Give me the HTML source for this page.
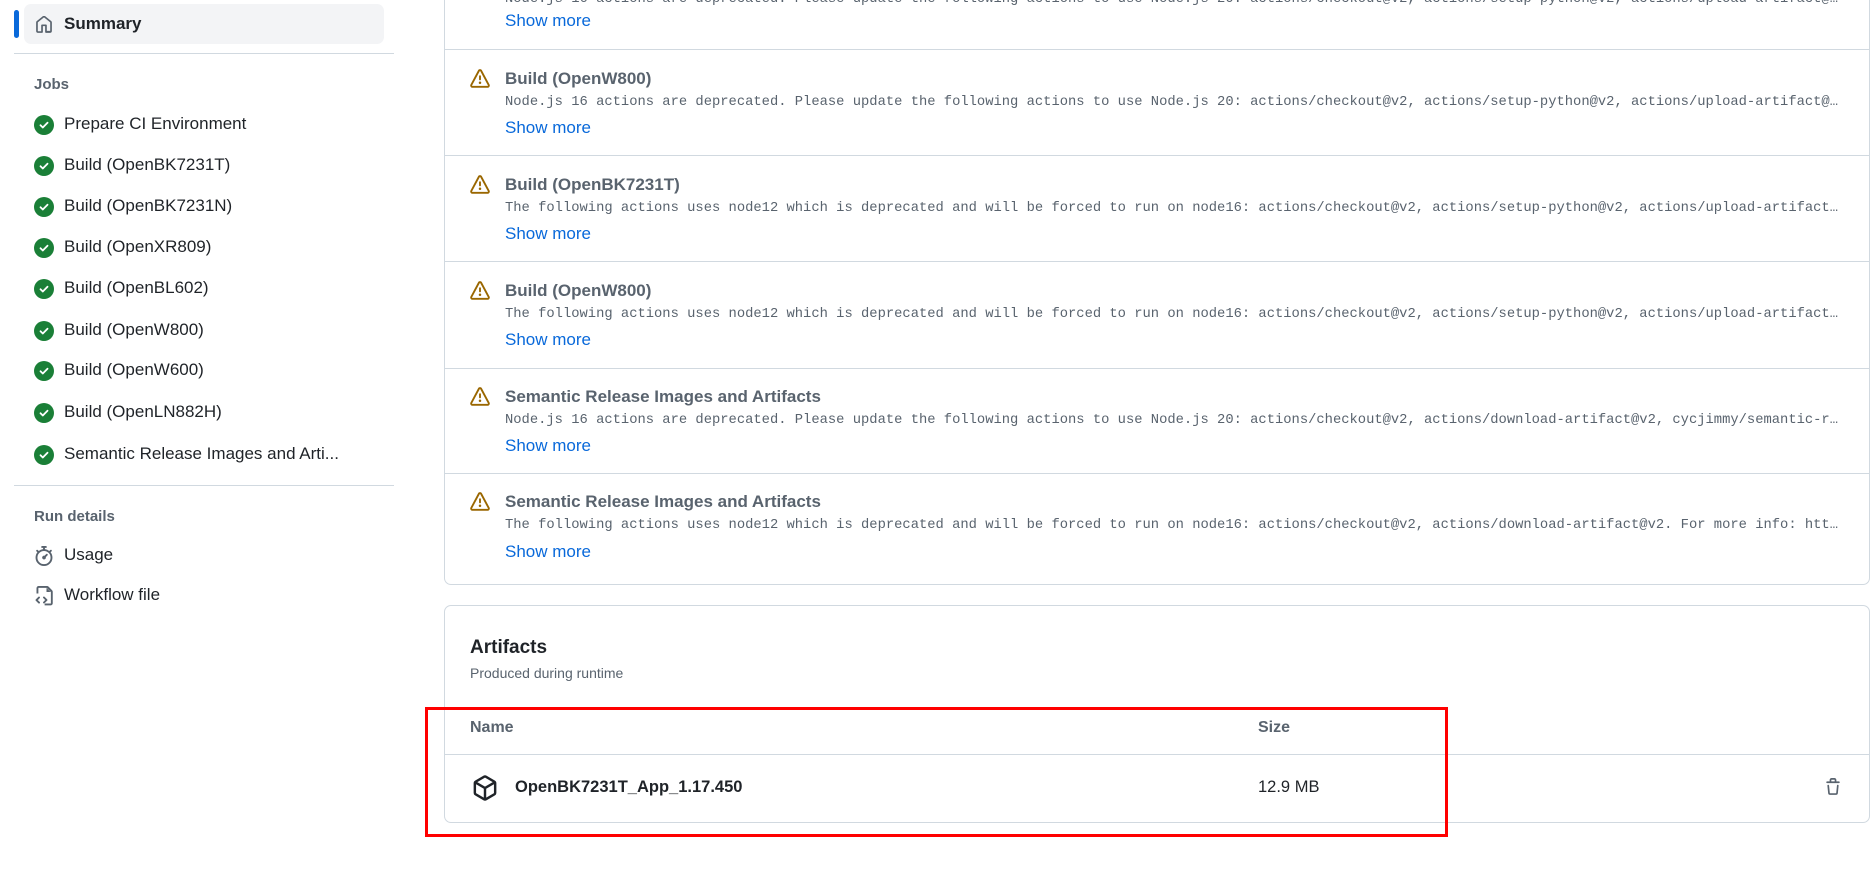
<!DOCTYPE html>
<html><head><meta charset="utf-8"><style>
*{box-sizing:border-box;margin:0;padding:0}
body{width:1872px;height:870px;background:#fff;font-family:"Liberation Sans",sans-serif;color:#1f2328;position:relative;overflow:hidden}
.a{position:absolute;white-space:nowrap}
.side{font-size:17px;color:#1f2328}
.lbl{font-size:15px;color:#59636e;font-weight:bold}
.chk{position:absolute;left:34px;width:20px;height:20px;border-radius:50%;background:#1a7f37}
.chk svg{position:absolute;left:4px;top:4px}
.card{position:absolute;left:444px;width:1426px;border:1px solid #d1d9e0;border-radius:7px;background:#fff}
.t{font-size:17px;color:#59636e;font-weight:bold}
.m{font-family:"Liberation Mono",monospace;font-size:13.8px;color:#59636e;width:1341px;overflow:hidden;text-overflow:ellipsis}
.s{font-size:17px;color:#0969da}
</style></head><body>
<div class="a" style="left:14px;top:10px;width:5px;height:28px;background:#0969da;border-radius:3px"></div>
<div class="a" style="left:24px;top:4px;width:360px;height:40px;background:#f3f4f6;border-radius:7px"></div>
<svg class="a" style="left:35px;top:16px" width="18" height="18" viewBox="0 0 16 16"><path d="M6.9.2a1.75 1.75 0 0 1 2.2 0l5.25 4.2c.4.33.65.83.65 1.36v7.49A1.75 1.75 0 0 1 13.25 15h-3.5a.75.75 0 0 1-.75-.75V9H7v5.25a.75.75 0 0 1-.75.75h-3.5A1.75 1.75 0 0 1 1 13.25V5.76c0-.53.24-1.03.65-1.36Zm1.25 1.170a.25.25 0 0 0-.3 0L2.6 5.58a.25.25 0 0 0-.1.18v7.49c0 .14.11.25.25.25H5.5V8.25a.75.75 0 0 1 .75-.75h3.5a.75.75 0 0 1 .75.75v5h2.75a.25.25 0 0 0 .25-.25V5.76a.25.25 0 0 0-.1-.2Z" fill="#59636e"/></svg>
<div class="a side" style="left:64px;top:14px;font-weight:bold">Summary</div>
<div class="a" style="left:14px;top:53px;width:380px;height:1px;background:#d1d9e0"></div>
<div class="a lbl" style="left:34px;top:76px">Jobs</div>

<div class="chk" style="top:115px"><svg width="12" height="12" viewBox="0 0 12 12"><path d="M2.5 6.2l2.3 2.3 4.7-4.8" stroke="#fff" stroke-width="1.8" fill="none" stroke-linecap="round" stroke-linejoin="round"/></svg></div>
<div class="a side" style="left:64px;top:114px">Prepare CI Environment</div>
<div class="chk" style="top:156px"><svg width="12" height="12" viewBox="0 0 12 12"><path d="M2.5 6.2l2.3 2.3 4.7-4.8" stroke="#fff" stroke-width="1.8" fill="none" stroke-linecap="round" stroke-linejoin="round"/></svg></div>
<div class="a side" style="left:64px;top:155px">Build (OpenBK7231T)</div>
<div class="chk" style="top:197px"><svg width="12" height="12" viewBox="0 0 12 12"><path d="M2.5 6.2l2.3 2.3 4.7-4.8" stroke="#fff" stroke-width="1.8" fill="none" stroke-linecap="round" stroke-linejoin="round"/></svg></div>
<div class="a side" style="left:64px;top:196px">Build (OpenBK7231N)</div>
<div class="chk" style="top:238px"><svg width="12" height="12" viewBox="0 0 12 12"><path d="M2.5 6.2l2.3 2.3 4.7-4.8" stroke="#fff" stroke-width="1.8" fill="none" stroke-linecap="round" stroke-linejoin="round"/></svg></div>
<div class="a side" style="left:64px;top:237px">Build (OpenXR809)</div>
<div class="chk" style="top:279px"><svg width="12" height="12" viewBox="0 0 12 12"><path d="M2.5 6.2l2.3 2.3 4.7-4.8" stroke="#fff" stroke-width="1.8" fill="none" stroke-linecap="round" stroke-linejoin="round"/></svg></div>
<div class="a side" style="left:64px;top:278px">Build (OpenBL602)</div>
<div class="chk" style="top:321px"><svg width="12" height="12" viewBox="0 0 12 12"><path d="M2.5 6.2l2.3 2.3 4.7-4.8" stroke="#fff" stroke-width="1.8" fill="none" stroke-linecap="round" stroke-linejoin="round"/></svg></div>
<div class="a side" style="left:64px;top:320px">Build (OpenW800)</div>
<div class="chk" style="top:361px"><svg width="12" height="12" viewBox="0 0 12 12"><path d="M2.5 6.2l2.3 2.3 4.7-4.8" stroke="#fff" stroke-width="1.8" fill="none" stroke-linecap="round" stroke-linejoin="round"/></svg></div>
<div class="a side" style="left:64px;top:360px">Build (OpenW600)</div>
<div class="chk" style="top:403px"><svg width="12" height="12" viewBox="0 0 12 12"><path d="M2.5 6.2l2.3 2.3 4.7-4.8" stroke="#fff" stroke-width="1.8" fill="none" stroke-linecap="round" stroke-linejoin="round"/></svg></div>
<div class="a side" style="left:64px;top:402px">Build (OpenLN882H)</div>
<div class="chk" style="top:445px"><svg width="12" height="12" viewBox="0 0 12 12"><path d="M2.5 6.2l2.3 2.3 4.7-4.8" stroke="#fff" stroke-width="1.8" fill="none" stroke-linecap="round" stroke-linejoin="round"/></svg></div>
<div class="a side" style="left:64px;top:444px">Semantic Release Images and Arti...</div>
<div class="a" style="left:14px;top:485px;width:380px;height:1px;background:#d1d9e0"></div>
<div class="a lbl" style="left:34px;top:508px">Run details</div>
<svg class="a" style="left:34px;top:546px" width="20" height="20" viewBox="0 0 16 16"><path d="M5.75.75A.75.75 0 0 1 6.5 0h3a.75.75 0 0 1 0 1.5h-.75v1l-.001.041a6.724 6.724 0 0 1 3.464 1.435l.007-.006.75-.75a.749.749 0 0 1 1.275.326.749.749 0 0 1-.215.734l-.75.75-.006.007a6.75 6.75 0 1 1-10.548 0L2.720 5.030l-.75-.75a.751.751 0 0 1 .018-1.042.751.751 0 0 1 1.042-.018l.75.75.007.006A6.72 6.720 0 0 1 7.25 2.541V1.5H6.5a.75.75 0 0 1-.75-.75ZM8 14.5A5.25 5.25 0 1 0 8 4a5.25 5.25 0 0 0 0 10.5Zm.389-6.7 1.33-1.33a.75.75 0 1 1 1.061 1.06L9.45 8.861A1.503 1.503 0 0 1 8 10.75a1.499 1.499 0 1 1 .389-2.950Z" fill="#59636e"/></svg>
<div class="a side" style="left:64px;top:545px">Usage</div>
<svg class="a" style="left:34px;top:586px" width="20" height="20" viewBox="0 0 16 16"><path d="M3.5 1.75a.25.25 0 0 1 .25-.25h6.5l3.25 3.25v9a.25.25 0 0 1-.25.25H8.5V15.5h4.75A1.75 1.75 0 0 0 15 13.75V4.6c0-.46-.18-.9-.51-1.24L11.64.51A1.75 1.75 0 0 0 10.4 0H3.75A1.75 1.75 0 0 0 2 1.75V6h1.5ZM10 1.5v3.25h3.25M4.53 9.72 3.06 11.25l1.47 1.47a.75.75 0 1 1-1.06 1.06l-2-2a.75.75 0 0 1 0-1.06l2-2a.75.75 0 1 1 1.06 1.060Zm2.94 0a.75.75 0 1 1 1.06-1.06l2 2a.75.75 0 0 1 0 1.06l-2 2a.75.75 0 1 1-1.06-1.06l1.47-1.47Z" fill="#59636e"/></svg>
<div class="a side" style="left:64px;top:585px">Workflow file</div>

<div class="card" style="top:-10px;height:595px;border-top:none;border-radius:0 0 7px 7px"></div>
<div class="a m" style="left:505px;top:-8px">Node.js 16 actions are deprecated. Please update the following actions to use Node.js 20: actions/checkout@v2, actions/setup-python@v2, actions/upload-artifact@v2</div>
<div class="a s" style="left:505px;top:11px">Show more</div>

<div class="a" style="left:444px;top:49px;width:1426px;height:1px;background:#d1d9e0"></div>
<div class="a" style="left:444px;top:155px;width:1426px;height:1px;background:#d1d9e0"></div>
<div class="a" style="left:444px;top:261px;width:1426px;height:1px;background:#d1d9e0"></div>
<div class="a" style="left:444px;top:368px;width:1426px;height:1px;background:#d1d9e0"></div>
<div class="a" style="left:444px;top:473px;width:1426px;height:1px;background:#d1d9e0"></div>

<svg class="a" style="left:470px;top:69px" width="20" height="20" viewBox="0 0 16 16"><path d="M6.457 1.047c.659-1.234 2.427-1.234 3.086 0l6.082 11.378A1.75 1.75 0 0 1 14.082 15H1.918a1.75 1.75 0 0 1-1.543-2.575Zm1.763.707a.25.25 0 0 0-.44 0L1.698 13.132a.25.25 0 0 0 .22.368h12.164a.25.25 0 0 0 .22-.368Zm.53 3.996v2.5a.75.75 0 0 1-1.5 0v-2.5a.75.75 0 0 1 1.5 0ZM9 11a1 1 0 1 1-2 0 1 1 0 0 1 2 0Z" fill="#9a6700"/></svg>
<div class="a t" style="left:505px;top:69px">Build (OpenW800)</div>
<div class="a m" style="left:505px;top:95px">Node.js 16 actions are deprecated. Please update the following actions to use Node.js 20: actions/checkout@v2, actions/setup-python@v2, actions/upload-artifact@v2</div>
<div class="a s" style="left:505px;top:118px">Show more</div>

<svg class="a" style="left:470px;top:175px" width="20" height="20" viewBox="0 0 16 16"><path d="M6.457 1.047c.659-1.234 2.427-1.234 3.086 0l6.082 11.378A1.75 1.75 0 0 1 14.082 15H1.918a1.75 1.75 0 0 1-1.543-2.575Zm1.763.707a.25.25 0 0 0-.44 0L1.698 13.132a.25.25 0 0 0 .22.368h12.164a.25.25 0 0 0 .22-.368Zm.53 3.996v2.5a.75.75 0 0 1-1.5 0v-2.5a.75.75 0 0 1 1.5 0ZM9 11a1 1 0 1 1-2 0 1 1 0 0 1 2 0Z" fill="#9a6700"/></svg>
<div class="a t" style="left:505px;top:175px">Build (OpenBK7231T)</div>
<div class="a m" style="left:505px;top:201px">The following actions uses node12 which is deprecated and will be forced to run on node16: actions/checkout@v2, actions/setup-python@v2, actions/upload-artifact@v2</div>
<div class="a s" style="left:505px;top:224px">Show more</div>

<svg class="a" style="left:470px;top:281px" width="20" height="20" viewBox="0 0 16 16"><path d="M6.457 1.047c.659-1.234 2.427-1.234 3.086 0l6.082 11.378A1.75 1.75 0 0 1 14.082 15H1.918a1.75 1.75 0 0 1-1.543-2.575Zm1.763.707a.25.25 0 0 0-.44 0L1.698 13.132a.25.25 0 0 0 .22.368h12.164a.25.25 0 0 0 .22-.368Zm.53 3.996v2.5a.75.75 0 0 1-1.5 0v-2.5a.75.75 0 0 1 1.5 0ZM9 11a1 1 0 1 1-2 0 1 1 0 0 1 2 0Z" fill="#9a6700"/></svg>
<div class="a t" style="left:505px;top:281px">Build (OpenW800)</div>
<div class="a m" style="left:505px;top:307px">The following actions uses node12 which is deprecated and will be forced to run on node16: actions/checkout@v2, actions/setup-python@v2, actions/upload-artifact@v2</div>
<div class="a s" style="left:505px;top:330px">Show more</div>

<svg class="a" style="left:470px;top:387px" width="20" height="20" viewBox="0 0 16 16"><path d="M6.457 1.047c.659-1.234 2.427-1.234 3.086 0l6.082 11.378A1.75 1.75 0 0 1 14.082 15H1.918a1.75 1.75 0 0 1-1.543-2.575Zm1.763.707a.25.25 0 0 0-.44 0L1.698 13.132a.25.25 0 0 0 .22.368h12.164a.25.25 0 0 0 .22-.368Zm.53 3.996v2.5a.75.75 0 0 1-1.5 0v-2.5a.75.75 0 0 1 1.5 0ZM9 11a1 1 0 1 1-2 0 1 1 0 0 1 2 0Z" fill="#9a6700"/></svg>
<div class="a t" style="left:505px;top:387px">Semantic Release Images and Artifacts</div>
<div class="a m" style="left:505px;top:413px">Node.js 16 actions are deprecated. Please update the following actions to use Node.js 20: actions/checkout@v2, actions/download-artifact@v2, cycjimmy/semantic-release-action@v3</div>
<div class="a s" style="left:505px;top:436px">Show more</div>

<svg class="a" style="left:470px;top:492px" width="20" height="20" viewBox="0 0 16 16"><path d="M6.457 1.047c.659-1.234 2.427-1.234 3.086 0l6.082 11.378A1.75 1.75 0 0 1 14.082 15H1.918a1.75 1.75 0 0 1-1.543-2.575Zm1.763.707a.25.25 0 0 0-.44 0L1.698 13.132a.25.25 0 0 0 .22.368h12.164a.25.25 0 0 0 .22-.368Zm.53 3.996v2.5a.75.75 0 0 1-1.5 0v-2.5a.75.75 0 0 1 1.5 0ZM9 11a1 1 0 1 1-2 0 1 1 0 0 1 2 0Z" fill="#9a6700"/></svg>
<div class="a t" style="left:505px;top:492px">Semantic Release Images and Artifacts</div>
<div class="a m" style="left:505px;top:518px">The following actions uses node12 which is deprecated and will be forced to run on node16: actions/checkout@v2, actions/download-artifact@v2. For more info: https://github.blog</div>
<div class="a s" style="left:505px;top:542px">Show more</div>

<div class="card" style="top:605px;height:218px"></div>
<div class="a" style="left:470px;top:637px;font-size:19px;font-weight:bold;color:#1f2328">Artifacts</div>
<div class="a" style="left:470px;top:665px;font-size:14px;color:#59636e">Produced during runtime</div>
<div class="a" style="left:470px;top:719px;font-size:16px;font-weight:bold;color:#59636e">Name</div>
<div class="a" style="left:1258px;top:719px;font-size:16px;font-weight:bold;color:#59636e">Size</div>
<div class="a" style="left:445px;top:754px;width:1424px;height:1px;background:#d1d9e0"></div>
<svg class="a" style="left:472px;top:775px" width="26" height="26" viewBox="0 0 16 16"><path d="m8.878.392 5.25 3.045c.54.314.872.89.872 1.514v6.098a1.75 1.75 0 0 1-.872 1.514l-5.25 3.045a1.75 1.75 0 0 1-1.756 0l-5.25-3.045A1.75 1.75 0 0 1 1 11.049V4.951c0-.624.332-1.201.872-1.514L7.122.392a1.75 1.75 0 0 1 1.756 0ZM7.875 1.690l-4.63 2.685L8 7.133l4.755-2.758-4.63-2.685a.248.248 0 0 0-.25 0ZM2.5 5.677v5.372c0 .09.047.171.125.216l4.625 2.683V8.432Zm6.25 8.271 4.625-2.683a.25.25 0 0 0 .125-.216V5.677L8.75 8.432Z" fill="#1f2328"/></svg>
<div class="a" style="left:515px;top:778px;font-size:16.5px;font-weight:bold;color:#1f2328">OpenBK7231T_App_1.17.450</div>
<div class="a" style="left:1258px;top:778px;font-size:16.5px;color:#1f2328">12.9 MB</div>
<svg class="a" style="left:1824px;top:778px" width="18" height="18" viewBox="0 0 16 16"><path d="M11 1.75V3h2.25a.75.75 0 0 1 0 1.5H2.75a.75.75 0 0 1 0-1.5H5V1.75C5 .784 5.784 0 6.75 0h2.5C10.216 0 11 .784 11 1.75ZM4.496 6.675l.66 6.6a.25.25 0 0 0 .249.225h5.19a.25.25 0 0 0 .249-.225l.66-6.6a.75.75 0 0 1 1.492.149l-.66 6.6A1.748 1.748 0 0 1 10.595 15h-5.19a1.75 1.75 0 0 1-1.741-1.575l-.66-6.6a.75.75 0 1 1 1.492-.15ZM6.5 1.75V3h3V1.75a.25.25 0 0 0-.25-.25h-2.5a.25.25 0 0 0-.25.25Z" fill="#59636e"/></svg>
<div class="a" style="left:425px;top:707px;width:1023px;height:130px;border:3px solid #f00"></div>
</body></html>
